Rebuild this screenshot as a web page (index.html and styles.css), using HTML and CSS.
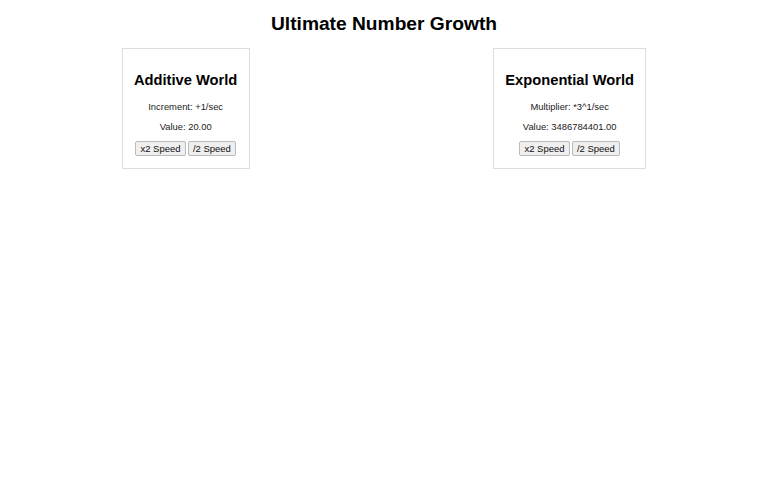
FILE: index.html
```html
<!DOCTYPE html>
<html>
<head>
<meta charset="utf-8">
<link rel="stylesheet" href="styles.css">
</head>
<body>
<h1 class="title">Ultimate Number Growth</h1>
<div class="worlds">
  <div class="world">
    <h2 class="world-name">Additive World</h2>
    <p class="stat">Increment: +1/sec</p>
    <p class="stat">Value: 20.00</p>
    <div class="controls"><button class="btn">x2 Speed</button> <button class="btn">/2 Speed</button></div>
  </div>
  <div class="world">
    <h2 class="world-name">Exponential World</h2>
    <p class="stat">Multiplier: *3^1/sec</p>
    <p class="stat">Value: 3486784401.00</p>
    <div class="controls"><button class="btn">x2 Speed</button> <button class="btn">/2 Speed</button></div>
  </div>
</div>
</body>
</html>
```
FILE: styles.css
```css
html, body {
  margin: 0;
  padding: 0;
  background: #fff;
}
body {
  font-family: "Liberation Sans", Arial, sans-serif;
  color: #000;
}
.title {
  font-size: 19.2px;
  font-weight: bold;
  text-align: center;
  margin: 12px 0 13px;
  line-height: 23px;
}
.worlds {
  display: flex;
  justify-content: space-around;
  align-items: flex-start;
}
.world {
  border: 1px solid #ddd;
  padding: 12px 11.3px 12px;
  text-align: center;
}
.world-name {
  font-size: 14.7px;
  font-weight: bold;
  margin: 10.5px 0 12.5px;
  line-height: 17px;
}
.stat {
  font-size: 9.4px;
  margin: 0 0 9px;
  line-height: 11px;
  color: #222;
}
.controls {
  font-size: 8.3px;
  line-height: 15px;
  margin-top: 1px;
}
.btn {
  font-family: "Liberation Sans", Arial, sans-serif;
  font-size: 9.5px;
  height: 15px;
  padding: 0 4px;
  border: 1px solid #bbb;
  border-radius: 2px;
  background: #efefef;
  color: #111;
  line-height: 13px;
  vertical-align: top;
}
```
